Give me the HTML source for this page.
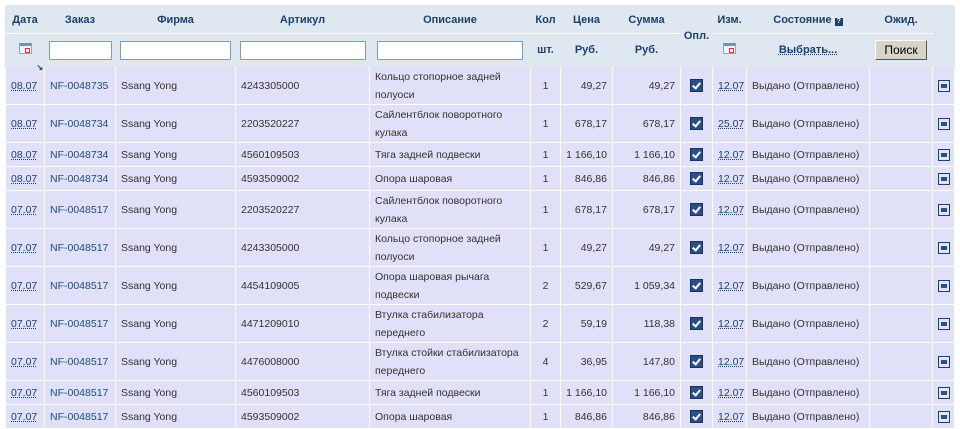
<!DOCTYPE html>
<html><head><meta charset="utf-8"><style>
body{margin:0;background:#fff;width:960px;height:427px;overflow:hidden;font-family:Tahoma,"Liberation Sans",sans-serif;font-size:10.5px;color:#333}
table{position:absolute;left:5px;top:5px;border-collapse:collapse;table-layout:fixed;width:950px;border:1px solid #98aab8;border-bottom:none}
td,th{border:1px solid #fff;padding:0 0 0 5px;white-space:nowrap;overflow:hidden;line-height:14px}
th{background:#dfe8f0;color:#1c416b;font-weight:bold;font-size:11px;text-align:center;padding:0;border-color:#dfe8f0}
th.h1{border-bottom:1px solid #fff}
tr.b td{background:#e0e0f8}
tr.b1 td{height:23px}
tr.b2 td{height:37px}
.d{text-decoration:underline dotted;color:#1c416b}
.o{color:#1a4f7a}
.r{text-align:right;padding:0 5px 0 0}
.c{text-align:center;padding:0}
.desc{white-space:normal;line-height:18px}
.inp{display:block;margin:0 auto;height:19px;border:1px solid #7f9db9;background:#fff;box-sizing:border-box}
.cal{display:inline-block;width:13px;height:11px;border:1px solid #9aa;background:#f4f4f4;border-top:3px solid #7b8fb5;position:relative;box-sizing:border-box}
.cal:after{content:"";position:absolute;left:5px;top:2px;width:3px;height:3px;border:1px solid #b44}
.chk{display:inline-block;width:11px;height:11px;background:#2a4f86;border:1px solid #17345f;position:relative;vertical-align:middle}
.chk:after{content:"";position:absolute;left:3px;top:1px;width:3px;height:6px;border:solid #fff;border-width:0 2px 2px 0;transform:rotate(40deg)}
.ic{display:inline-block;width:10px;height:10px;border:1px solid #1f3f70;background:#dfe6f2;position:relative;vertical-align:middle}
.ic:after{content:"";position:absolute;left:2px;top:3px;width:6px;height:4px;background:#2a4f86}
.btn{display:inline-block;width:52px;height:20px;line-height:19px;background:#d9d4c8;border:1px solid;border-color:#fff #555 #555 #fff;color:#000;font-weight:normal;font-size:12px;box-sizing:border-box}
</style></head><body>
<table>
<colgroup><col style="width:39px"><col style="width:71px"><col style="width:120px"><col style="width:134px"><col style="width:161px"><col style="width:30px"><col style="width:52px"><col style="width:68px"><col style="width:32px"><col style="width:34px"><col style="width:123px"><col style="width:63px"><col style="width:22px"></colgroup>
<tr style="height:28px"><th class="h1">Дата</th><th class="h1">Заказ</th><th class="h1">Фирма</th><th class="h1">Артикул</th><th class="h1">Описание</th><th class="h1">Кол</th><th class="h1">Цена</th><th class="h1">Сумма</th><th rowspan="2">Опл.</th><th class="h1">Изм.</th><th class="h1">Состояние <span style="display:inline-block;width:8px;height:8px;background:#1c416b;color:#fff;font-size:7px;line-height:8px">?</span></th><th class="h1">Ожид.</th><th rowspan="2"></th></tr>
<tr style="height:33px"><th><span class="cal"></span><span style="position:absolute;left:31px;top:55px;color:#1c416b;font-size:8px">&#8600;</span></th><th><span class="inp" style="width:63px"></span></th><th><span class="inp" style="width:111px"></span></th><th><span class="inp" style="width:126px"></span></th><th><span class="inp" style="width:146px"></span></th><th>шт.</th><th>Руб.</th><th>Руб.</th><th><span class="cal"></span></th><th><span class="d" style="font-weight:bold">Выбрать...</span></th><th><span class="btn">Поиск</span></th></tr>
<tr class="b b2"><td><span class="d">08.07</span></td><td class="o">NF-0048735</td><td>Ssang Yong</td><td>4243305000</td><td class="desc">Кольцо стопорное задней полуоси</td><td class="c">1</td><td class="r">49,27</td><td class="r">49,27</td><td class="c"><span class="chk"></span></td><td><span class="d">12.07</span></td><td>Выдано (Отправлено)</td><td></td><td class="c"><span class="ic"></span></td></tr>
<tr class="b b2"><td><span class="d">08.07</span></td><td class="o">NF-0048734</td><td>Ssang Yong</td><td>2203520227</td><td class="desc">Сайлентблок поворотного кулака</td><td class="c">1</td><td class="r">678,17</td><td class="r">678,17</td><td class="c"><span class="chk"></span></td><td><span class="d">25.07</span></td><td>Выдано (Отправлено)</td><td></td><td class="c"><span class="ic"></span></td></tr>
<tr class="b b1"><td><span class="d">08.07</span></td><td class="o">NF-0048734</td><td>Ssang Yong</td><td>4560109503</td><td>Тяга задней подвески</td><td class="c">1</td><td class="r">1 166,10</td><td class="r">1 166,10</td><td class="c"><span class="chk"></span></td><td><span class="d">12.07</span></td><td>Выдано (Отправлено)</td><td></td><td class="c"><span class="ic"></span></td></tr>
<tr class="b b1"><td><span class="d">08.07</span></td><td class="o">NF-0048734</td><td>Ssang Yong</td><td>4593509002</td><td>Опора шаровая</td><td class="c">1</td><td class="r">846,86</td><td class="r">846,86</td><td class="c"><span class="chk"></span></td><td><span class="d">12.07</span></td><td>Выдано (Отправлено)</td><td></td><td class="c"><span class="ic"></span></td></tr>
<tr class="b b2"><td><span class="d">07.07</span></td><td class="o">NF-0048517</td><td>Ssang Yong</td><td>2203520227</td><td class="desc">Сайлентблок поворотного кулака</td><td class="c">1</td><td class="r">678,17</td><td class="r">678,17</td><td class="c"><span class="chk"></span></td><td><span class="d">12.07</span></td><td>Выдано (Отправлено)</td><td></td><td class="c"><span class="ic"></span></td></tr>
<tr class="b b2"><td><span class="d">07.07</span></td><td class="o">NF-0048517</td><td>Ssang Yong</td><td>4243305000</td><td class="desc">Кольцо стопорное задней полуоси</td><td class="c">1</td><td class="r">49,27</td><td class="r">49,27</td><td class="c"><span class="chk"></span></td><td><span class="d">12.07</span></td><td>Выдано (Отправлено)</td><td></td><td class="c"><span class="ic"></span></td></tr>
<tr class="b b2"><td><span class="d">07.07</span></td><td class="o">NF-0048517</td><td>Ssang Yong</td><td>4454109005</td><td class="desc">Опора шаровая рычага подвески</td><td class="c">2</td><td class="r">529,67</td><td class="r">1 059,34</td><td class="c"><span class="chk"></span></td><td><span class="d">12.07</span></td><td>Выдано (Отправлено)</td><td></td><td class="c"><span class="ic"></span></td></tr>
<tr class="b b2"><td><span class="d">07.07</span></td><td class="o">NF-0048517</td><td>Ssang Yong</td><td>4471209010</td><td class="desc">Втулка стабилизатора переднего</td><td class="c">2</td><td class="r">59,19</td><td class="r">118,38</td><td class="c"><span class="chk"></span></td><td><span class="d">12.07</span></td><td>Выдано (Отправлено)</td><td></td><td class="c"><span class="ic"></span></td></tr>
<tr class="b b2"><td><span class="d">07.07</span></td><td class="o">NF-0048517</td><td>Ssang Yong</td><td>4476008000</td><td class="desc">Втулка стойки стабилизатора переднего</td><td class="c">4</td><td class="r">36,95</td><td class="r">147,80</td><td class="c"><span class="chk"></span></td><td><span class="d">12.07</span></td><td>Выдано (Отправлено)</td><td></td><td class="c"><span class="ic"></span></td></tr>
<tr class="b b1"><td><span class="d">07.07</span></td><td class="o">NF-0048517</td><td>Ssang Yong</td><td>4560109503</td><td>Тяга задней подвески</td><td class="c">1</td><td class="r">1 166,10</td><td class="r">1 166,10</td><td class="c"><span class="chk"></span></td><td><span class="d">12.07</span></td><td>Выдано (Отправлено)</td><td></td><td class="c"><span class="ic"></span></td></tr>
<tr class="b b1"><td><span class="d">07.07</span></td><td class="o">NF-0048517</td><td>Ssang Yong</td><td>4593509002</td><td>Опора шаровая</td><td class="c">1</td><td class="r">846,86</td><td class="r">846,86</td><td class="c"><span class="chk"></span></td><td><span class="d">12.07</span></td><td>Выдано (Отправлено)</td><td></td><td class="c"><span class="ic"></span></td></tr>
</table>
</body></html>
